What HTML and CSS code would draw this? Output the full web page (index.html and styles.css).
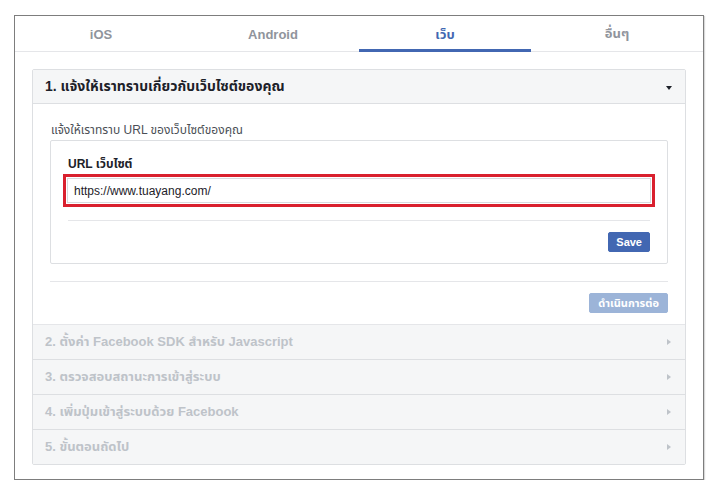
FILE: index.html
```html
<!DOCTYPE html>
<html lang="th">
<head>
<meta charset="utf-8">
<title>Facebook Login – เว็บ</title>
<link rel="stylesheet" href="styles.css">
</head>
<body>
<div class="frame">
  <div class="tabs">
    <div class="tab">iOS</div>
    <div class="tab">Android</div>
    <div class="tab active">เว็บ</div>
    <div class="tab">อื่นๆ</div>
  </div>
  <div class="content">
    <div class="steps">
      <div class="step-head open">
        <span class="step-title">1. แจ้งให้เราทราบเกี่ยวกับเว็บไซต์ของคุณ</span>
        <span class="caret-down"></span>
      </div>
      <div class="step-body">
        <p class="intro">แจ้งให้เราทราบ URL ของเว็บไซต์ของคุณ</p>
        <div class="form-box">
          <div class="field-label">URL เว็บไซต์</div>
          <div class="highlight">
            <div class="input">https://www.tuayang.com/</div>
          </div>
          <div class="form-actions">
            <button class="btn btn-primary">Save</button>
          </div>
        </div>
        <div class="step-actions">
          <button class="btn btn-disabled">ดำเนินการต่อ</button>
        </div>
      </div>
      <div class="step-head closed">
        <span class="step-title">2. ตั้งค่า Facebook SDK สำหรับ Javascript</span>
        <span class="caret-right"></span>
      </div>
      <div class="step-head closed">
        <span class="step-title">3. ตรวจสอบสถานะการเข้าสู่ระบบ</span>
        <span class="caret-right"></span>
      </div>
      <div class="step-head closed">
        <span class="step-title">4. เพิ่มปุ่มเข้าสู่ระบบด้วย Facebook</span>
        <span class="caret-right"></span>
      </div>
      <div class="step-head closed">
        <span class="step-title">5. ขั้นตอนถัดไป</span>
        <span class="caret-right"></span>
      </div>
    </div>
  </div>
</div>
</body>
</html>
```

FILE: styles.css
```css
* { box-sizing: border-box; }

body {
  margin: 0;
  background: #ffffff;
  font-family: "Liberation Sans", "Noto Sans Thai", "DejaVu Sans", sans-serif;
  color: #1d2129;
}

.frame {
  margin: 15px 0 0 14px;
  width: 690px;
  height: 465px;
  border: 1px solid #7d7d7d;
  box-shadow: 1px 1px 1px rgba(0,0,0,0.15);
  background: #fff;
}

.tabs {
  display: grid;
  grid-template-columns: repeat(4, 1fr);
  height: 36px;
  border-bottom: 1px solid #e5e6e9;
}

.tab {
  display: flex;
  align-items: center;
  justify-content: center;
  font-size: 13px;
  font-weight: bold;
  color: #90949c;
  padding-top: 1px;
}

.tab.active {
  color: #4267b2;
  border-bottom: 3px solid #4267b2;
  padding-top: 4px;
  margin-bottom: -1px;
}

.content {
  padding: 17px 17px 0 17px;
}

.steps {
  border: 1px solid #dddfe2;
  border-radius: 2px;
}

.step-head {
  display: flex;
  align-items: center;
  justify-content: space-between;
  height: 34px;
  padding: 0 13px 0 12px;
  background: #f5f6f7;
  font-size: 13px;
  font-weight: bold;
}

.step-head.open {
  border-bottom: 1px solid #dddfe2;
  color: #1d2129;
  font-size: 14px;
}

.step-head.closed {
  border-top: 1px solid #dddfe2;
  color: #bec3c9;
  height: 35px;
}

.step-body + .step-head.closed { border-top: 1px solid #e5e6e9; }

.caret-down {
  width: 0;
  height: 0;
  border-left: 3px solid transparent;
  border-right: 3px solid transparent;
  border-top: 4px solid #1d2129;
  margin-top: 3px;
}

.caret-right {
  width: 0;
  height: 0;
  border-top: 3px solid transparent;
  border-bottom: 3px solid transparent;
  border-left: 4px solid #bec3c9;
  margin-right: 1px;
}

.step-body {
  background: #fff;
  padding: 18px 17px 11px 17px;
}

.intro {
  margin: 0 0 2px 1px;
  font-size: 12px;
  line-height: 16px;
  color: #4b4f56;
}

.form-box {
  border: 1px solid #dddfe2;
  border-radius: 2px;
  padding: 15px 17px 11px 17px;
}

.field-label {
  font-size: 12px;
  font-weight: bold;
  line-height: 16px;
  color: #1d2129;
  margin-bottom: 2px;
}

.highlight {
  margin: 0 -5px;
  border: 3px solid #d9202e;
  padding: 1px;
}

.input {
  height: 25px;
  border: 1px solid #d7d9dd;
  padding: 0 6px;
  display: flex;
  align-items: center;
  font-size: 12px;
  color: #1d2129;
}

.form-actions {
  margin-top: 13px;
  border-top: 1px solid #e5e6e9;
  padding-top: 11px;
  display: flex;
  justify-content: flex-end;
}

.step-actions {
  margin-top: 17px;
  border-top: 1px solid #e5e6e9;
  padding-top: 11px;
  display: flex;
  justify-content: flex-end;
}

.btn {
  font-family: inherit;
  font-size: 11px;
  font-weight: bold;
  color: #fff;
  height: 20px;
  border-radius: 2px;
  padding: 0 7px;
  line-height: 18px;
}

.btn-primary {
  background: #4267b2;
  border: 1px solid #4267b2;
}

.btn-disabled {
  background: #9cb4d8;
  border: 1px solid #9cb4d8;
  padding: 0 8px;
}
```
